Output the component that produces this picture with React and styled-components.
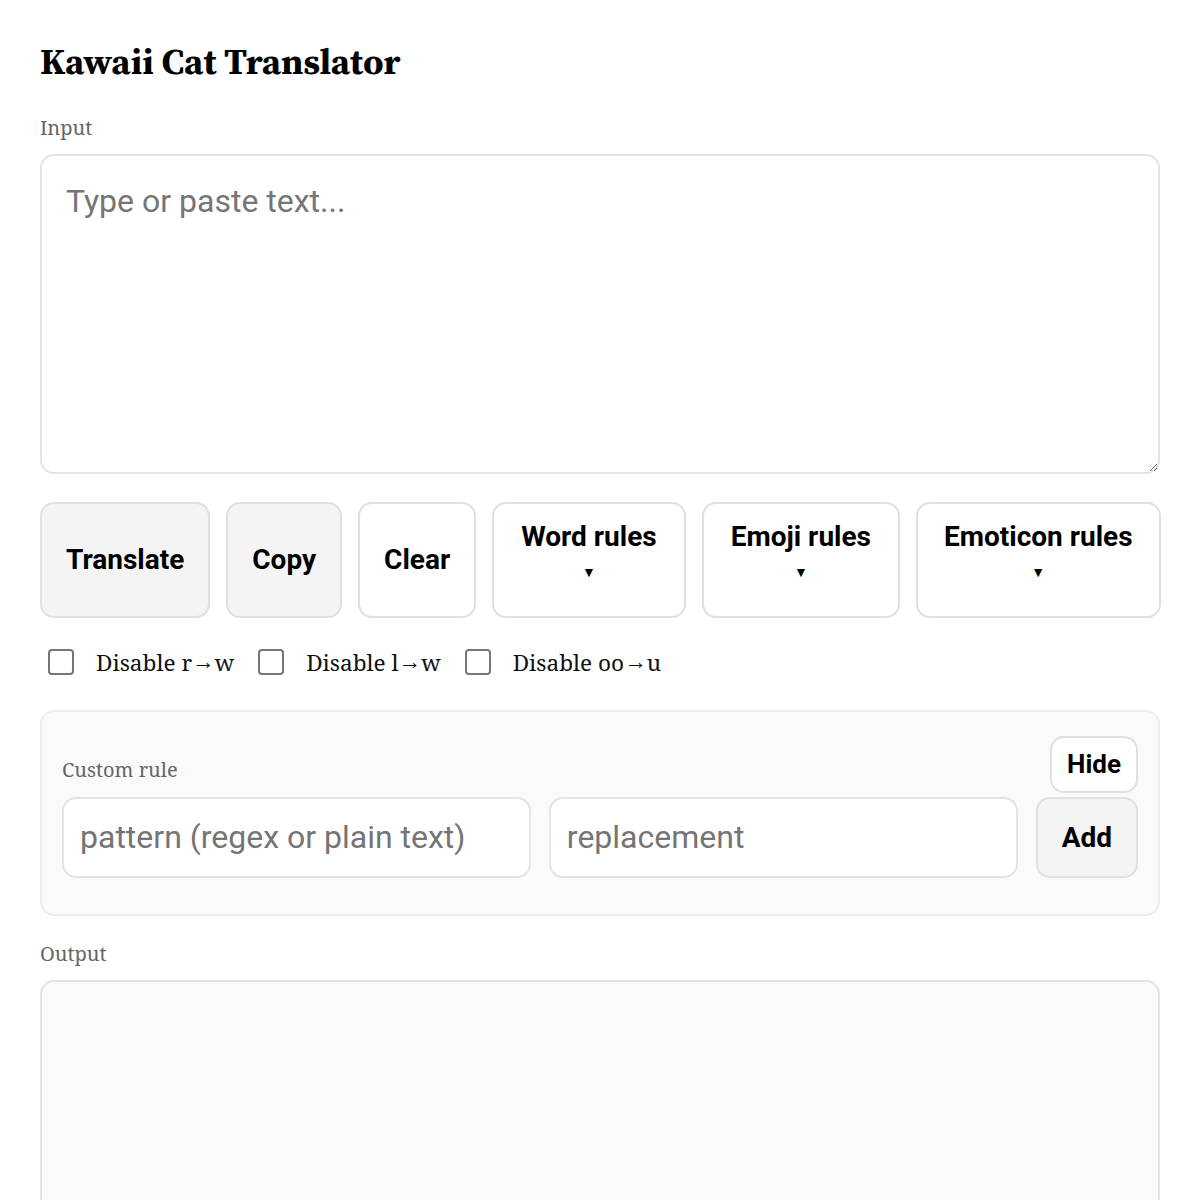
import React from 'react';
import styled, { createGlobalStyle } from 'styled-components';

const GlobalStyle = createGlobalStyle`
  html, body {
    margin: 0;
    padding: 0;
    background: #fff;
    color: #111;
    font-family: "Noto Serif", serif;
  }
`;

const Page = styled.main`
  padding: 40px 40px 0;
  display: flex;
  flex-direction: column;
`;

const Title = styled.h1`
  margin: 0 0 30px;
  font-family: "Source Serif 4", "Noto Serif", serif;
  font-size: 36.4px;
  font-weight: 700;
  line-height: 1.2;
  color: #000;
`;

const Label = styled.label`
  display: block;
  color: #666;
  font-size: 20px;
  margin-bottom: 13px;
`;

const TextArea = styled.textarea`
  box-sizing: border-box;
  width: 100%;
  height: 320px;
  padding: 26px 24px;
  border: 2px solid #e3e3e3;
  border-radius: 14px;
  font-family: Roboto, sans-serif;
  font-size: 32px;
  color: #111;
  background: ${p => (p.$muted ? '#fafafa' : '#fff')};
  resize: vertical;
  outline: none;

  &::placeholder {
    color: #757575;
  }
`;

const ButtonRow = styled.div`
  display: flex;
  gap: 16px;
  margin-top: 28px;
`;

const Button = styled.button`
  box-sizing: border-box;
  height: ${p => p.$h || 116}px;
  padding: 0 ${p => p.$px || 24}px;
  border: 2px solid #e0e0e0;
  border-radius: 14px;
  background: ${p => (p.$filled ? '#f4f4f4' : '#fff')};
  font-family: Roboto, sans-serif;
  font-weight: 700;
  font-size: ${p => p.$fs || 28}px;
  white-space: nowrap;
  color: #000;
  cursor: pointer;
  display: flex;
  flex-direction: column;
  align-items: center;
  justify-content: center;
`;

const MenuButton = styled(Button)`
  justify-content: flex-start;
  padding: 16px ${p => p.$px || 27}px 0;
  line-height: 34px;
`;

const Caret = styled.span`
  font-size: 14px;
  line-height: 14px;
  margin-top: 11px;
`;

const Checks = styled.div`
  display: flex;
  align-items: center;
  margin: 29px 0 32px 8px;
  font-size: 22.6px;
`;

const CheckItem = styled.label`
  display: flex;
  align-items: center;
  margin-right: 24px;
  color: #111;
`;

const Arrow = styled.span`
  position: relative;
  top: -2px;
`;

const Box = styled.input`
  appearance: none;
  width: 26px;
  height: 26px;
  margin: 0 22px 0 0;
  border: 2px solid #767676;
  border-radius: 4px;
  background: #fff;
`;

const Panel = styled.section`
  border: 2px solid #eeeeee;
  border-radius: 14px;
  background: #fafafa;
  padding: 24px 20px 36px;
  display: flex;
  flex-direction: column;
  gap: 4px;
  margin-bottom: 24px;
`;

const PanelHead = styled.div`
  display: flex;
  justify-content: space-between;
  align-items: flex-end;
`;

const PanelLabel = styled.span`
  color: #666;
  font-size: 20px;
  margin-bottom: 10px;
`;

const Fields = styled.div`
  display: flex;
  gap: 18px;
`;

const Field = styled.input`
  box-sizing: border-box;
  flex: 1;
  min-width: 0;
  height: 81px;
  padding: 0 16px;
  border: 2px solid #e3e3e3;
  border-radius: 14px;
  background: #fff;
  font-family: Roboto, sans-serif;
  font-size: 32px;
  outline: none;

  &::placeholder {
    color: #757575;
  }
`;

const rules = [
  ['r', 'w'],
  ['l', 'w'],
  ['oo', 'u'],
];

export default function App() {
  return (
    <>
      <GlobalStyle />
      <Page>
        <Title>Kawaii Cat Translator</Title>

        <Label>Input</Label>
        <TextArea placeholder="Type or paste text..." />

        <ButtonRow>
          <Button $filled>Translate</Button>
          <Button $filled>Copy</Button>
          <Button>Clear</Button>
          <MenuButton>Word rules<Caret>▼</Caret></MenuButton>
          <MenuButton>Emoji rules<Caret>▼</Caret></MenuButton>
          <MenuButton $px={26}>Emoticon rules<Caret>▼</Caret></MenuButton>
        </ButtonRow>

        <Checks>
          {rules.map(([from, to]) => (
            <CheckItem key={from}>
              <Box type="checkbox" />
              Disable {from}<Arrow>→</Arrow>{to}
            </CheckItem>
          ))}
        </Checks>

        <Panel>
          <PanelHead>
            <PanelLabel>Custom rule</PanelLabel>
            <Button $h={57} $px={15} $fs={26}>Hide</Button>
          </PanelHead>
          <Fields>
            <Field placeholder="pattern (regex or plain text)" />
            <Field placeholder="replacement" />
            <Button $filled $h={81} $px={24}>Add</Button>
          </Fields>
        </Panel>

        <Label>Output</Label>
        <TextArea $muted readOnly />
      </Page>
    </>
  );
}
